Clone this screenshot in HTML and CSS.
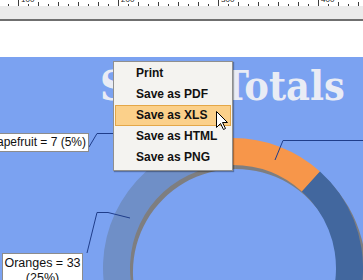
FILE: index.html
```html
<!DOCTYPE html>
<html>
	<head>
		<meta charset="UTF-8">
		<title>Sales Totals</title>
		<link rel="stylesheet" href="styles.css">
	</head>
	<body>
		<div class="ruler-wrap">
			<div class="ruler">
				<div class="ruler-cell"><span>0</span></div>
				<div class="ruler-cell"><span>100</span></div>
				<div class="ruler-cell"><span>200</span></div>
				<div class="ruler-cell"><span>300</span></div>
				<div class="ruler-cell"><span>400</span></div>
			</div>
		</div>
		<div class="toolbar"></div>
		<div class="blank"></div>

		<div class="chart">
			<h1 class="chart-title">Sales Totals</h1>

			<svg class="donut" width="363" height="223" viewBox="0 0 363 223">
				<!-- shadow -->
				<g transform="translate(3,4)" fill="#7e7e80">
					<path d="M233 81 A130 130 0 1 1 232.9 81 L232.9 108 A103 103 0 1 0 233 108 Z"/>
				</g>
				<!-- slices -->
				<path fill="#6f8fc7" d="M110.84 255.46 A130 130 0 0 1 188.54 88.84 L197.77 114.21 A103 103 0 0 0 136.21 246.23 Z"/>
				<path fill="#6f8fc7" d="M188.54 88.84 A130 130 0 0 1 233 81 L233 108 A103 103 0 0 0 197.77 114.21 Z"/>
				<path fill="#f7964a" d="M233 81 A130 130 0 0 1 319.99 114.40 L301.92 134.46 A103 103 0 0 0 233 108 Z"/>
				<path fill="#42679e" d="M319.99 114.40 A130 130 0 1 1 110.84 255.46 L136.21 246.23 A103 103 0 1 0 301.92 134.46 Z"/>
				<!-- leaders -->
				<g fill="none" stroke="#1f3d8a" stroke-width="1">
					<polyline points="275,103 283,83.5 363,83.5"/>
					<polyline points="89,90 97,76.5 200,76.5"/>
					<polyline points="130,161 108,155.5 97,155.5 87,196"/>
				</g>
			</svg>

			<div class="label label-grapefruit">Grapefruit = 7 (5%)</div>
			<div class="label label-oranges">Oranges = 33<br>(25%)</div>

			<ul class="menu">
				<li>Print</li>
				<li>Save as PDF</li>
				<li class="active">Save as XLS</li>
				<li>Save as HTML</li>
				<li>Save as PNG</li>
			</ul>

			<svg class="cursor" width="13" height="20" viewBox="0 0 13 20">
				<path d="M0.5 0.5 L0.5 16.5 L4.5 12.5 L7.5 18.5 L9.5 17.5 L6.5 11.5 L11.5 11.5 Z" fill="#fff" stroke="#000" stroke-width="1" stroke-linejoin="miter"/>
			</svg>
		</div>
	</body>
</html>
```

FILE: styles.css
```css
html,body{
	margin:0;
	padding:0;
}
body{
	width:363px;
	height:280px;
	overflow:hidden;
	font-family:"Liberation Sans", Arial, sans-serif;
	background:#fff;
}

/* ruler */
.ruler-wrap{
	height:6px;
	overflow:hidden;
	background:#fff;
}
.ruler{
	display:flex;
	margin-left:-82px;
}
.ruler-cell{
	flex:0 0 100px;
	height:6px;
	box-sizing:border-box;
	border-left:1px solid #3c3c3c;
	background:
		repeating-linear-gradient(to right, transparent 0 19px, #3c3c3c 19px 20px) left bottom / 100% 4px no-repeat,
		repeating-linear-gradient(to right, transparent 0 9px, #3c3c3c 9px 10px) left bottom / 100% 2px no-repeat;
}
.ruler-cell span{
	display:block;
	width:14px;
	margin-top:-4px;
	padding-left:2px;
	font-size:8px;
	line-height:8px;
	color:#222;
	background:#fff;
}

.toolbar{
	height:13px;
	background:#ebebeb;
	border-bottom:2px solid #6f6f6f;
}
.blank{
	height:36px;
	background:#fff;
}

/* chart */
.chart{
	position:relative;
	height:223px;
	background:#7ba2f1;
	overflow:hidden;
}
.chart-title{
	margin:0;
	padding:5px 0 0 100px;
	font-family:"DejaVu Serif Condensed", "DejaVu Serif", serif;
	font-stretch:condensed;
	font-weight:bold;
	font-size:41px;
	line-height:48px;
	color:#e9ecf5;
	white-space:nowrap;
}
.donut{
	position:absolute;
	left:0;
	top:0;
}

.label{
	position:absolute;
	background:#fff;
	border:1px solid #8c8c8c;
	font-size:12px;
	color:#111;
	text-align:center;
}
.label-grapefruit{
	right:274px;
	top:76px;
	height:17px;
	line-height:17px;
	padding:0 2px 0 4px;
	white-space:nowrap;
}
.label-oranges{
	left:2px;
	top:196px;
	width:79px;
	padding-top:2px;
	line-height:15px;
	font-size:12.5px;
}

/* context menu */
.menu{
	position:absolute;
	left:113px;
	top:4px;
	width:118px;
	margin:0;
	padding:1px 0 2px;
	list-style:none;
	background:#f4f3f0;
	border:1px solid #8f8f8f;
	box-shadow:1px 1px 1px rgba(0,0,0,0.3);
}
.menu li{
	height:19px;
	line-height:19px;
	margin:0 1px;
	padding-left:20px;
	border:1px solid transparent;
	font-size:12px;
	font-weight:bold;
	color:#111;
}
.menu li.active{
	background:#fbd08a;
	border-color:#e4a748;
}

.cursor{
	position:absolute;
	left:216px;
	top:54px;
}
```
